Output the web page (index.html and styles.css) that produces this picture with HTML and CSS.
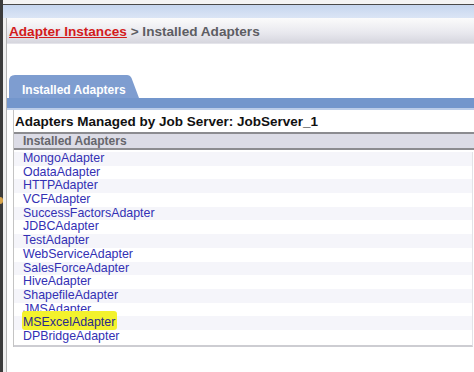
FILE: index.html
```html
<!DOCTYPE html>
<html>
<head>
<meta charset="utf-8">
<link rel="stylesheet" href="styles.css">
</head>
<body>
<div class="frame">
  <div class="edge"><span class="blip"></span></div>
  <div class="page">
    <div class="topgap"></div>
    <div class="blueband"></div>
    <div class="body">
      <div class="gutter"></div>
      <div class="main">
        <div class="crumbbar">
          <a class="crumb-link">Adapter Instances</a><span class="crumb-rest"> &gt; Installed Adapters</span>
        </div>
        <div class="spacer"></div>
        <div class="tabrow">
          <div class="tab"><span class="tab-label">Installed Adapters</span></div>
        </div>
        <div class="strip"></div>
        <div class="panel">
          <div class="heading">Adapters Managed by Job Server: JobServer_1</div>
          <div class="table">
            <div class="thead">Installed Adapters</div>
            <div class="rows">
              <div class="row odd"><a>MongoAdapter</a></div>
              <div class="row"><a>OdataAdapter</a></div>
              <div class="row odd"><a>HTTPAdapter</a></div>
              <div class="row"><a>VCFAdapter</a></div>
              <div class="row odd"><a>SuccessFactorsAdapter</a></div>
              <div class="row"><a>JDBCAdapter</a></div>
              <div class="row odd"><a>TestAdapter</a></div>
              <div class="row"><a>WebServiceAdapter</a></div>
              <div class="row odd"><a>SalesForceAdapter</a></div>
              <div class="row"><a>HiveAdapter</a></div>
              <div class="row odd"><a>ShapefileAdapter</a></div>
              <div class="row"><a>JMSAdapter</a></div>
              <div class="row odd"><a class="hl">MSExcelAdapter</a></div>
              <div class="row"><a>DPBridgeAdapter</a></div>
            </div>
          </div>
        </div>
      </div>
    </div>
  </div>
</div>
</body>
</html>
```

FILE: styles.css
```css
html, body {
  margin: 0;
  padding: 0;
  background: #ffffff;
}
body {
  width: 474px;
  height: 372px;
  overflow: hidden;
  font-family: "Liberation Sans", Arial, sans-serif;
}
.frame {
  display: flex;
  height: 372px;
}
.edge {
  width: 3px;
  background: #3b3b3b;
  display: flex;
  flex-direction: column;
  flex: none;
}
.blip {
  display: block;
  margin-top: 197px;
  width: 3px;
  height: 7px;
  background: #d9a54a;
  border-radius: 0 3px 3px 0;
}
.page {
  flex: 1;
  display: flex;
  flex-direction: column;
  min-width: 0;
}
.topgap {
  height: 4px;
  background: #f4f4f4;
  border-bottom: 1px solid #4a4a4a;
}
.blueband {
  height: 13px;
  background: linear-gradient(#c6d6ef, #dbe5f5);
}
.body {
  flex: 1;
  display: flex;
}
.gutter {
  width: 3px;
  background: #efefef;
  border-right: 1px solid #b4b4b4;
  flex: none;
}
.main {
  flex: 1;
  display: flex;
  flex-direction: column;
  min-width: 0;
}
.crumbbar {
  height: 25px;
  line-height: 28px;
  padding-left: 2px;
  background: linear-gradient(#fbfbfb, #e8e8ee 60%, #d6d6de);
  border-bottom: 1px solid #e4e4ea;
  font-size: 13.6px;
  font-weight: bold;
  white-space: nowrap;
}
.crumb-link {
  color: #d31b1b;
  text-decoration: underline;
}
.crumb-rest {
  color: #5d5d63;
}
.spacer {
  height: 31px;
}
.tabrow {
  display: flex;
  padding-left: 2px;
}
.tab {
  width: 130px;
  height: 23px;
  background: #7e9dd0;
  clip-path: path('M0 23 L0 6 Q0 0 6 0 L118 0 Q121 0 122.5 3 L130 23 Z');
  box-sizing: border-box;
  padding-left: 13px;
  padding-top: 5px;
}
.tab-label {
  display: inline-block;
  color: #ffffff;
  font-size: 12px;
  font-weight: bold;
  line-height: 14px;
  padding-bottom: 3px;
  border-bottom: 1px solid #a9bee2;
}
.strip {
  height: 10px;
  background: #7396cc;
  border-bottom: 2px solid #bccde8;
}
.panel {
  margin-left: 6px;
  border-left: 1px solid #c4c4c4;
  display: flex;
  flex-direction: column;
}
.heading {
  height: 22px;
  box-sizing: border-box;
  padding-top: 4px;
  padding-left: 1px;
  line-height: 16px;
  font-size: 13.5px;
  font-weight: bold;
  color: #111111;
  white-space: nowrap;
}
.table {
  display: flex;
  flex-direction: column;
}
.thead {
  height: 14px;
  line-height: 14px;
  border-top: 2px solid #8c8c90;
  border-bottom: 2px solid #8c8c90;
  background: #dcdce6;
  padding-left: 9px;
  font-size: 12px;
  font-weight: bold;
  color: #66666c;
  margin-bottom: 1px;
}
.rows {
  margin-top: 1px;
  margin-right: 1px;
  border-right: 1px solid #e2e2e6;
  border-bottom: 2px solid #cdcdd2;
  padding-bottom: 1px;
  display: flex;
  flex-direction: column;
}
.row {
  height: 13.7px;
  line-height: 13.7px;
  padding-left: 9px;
  font-size: 12.4px;
  white-space: nowrap;
}
.row.odd {
  background: #f5f5fa;
}
.row a {
  color: #3330b4;
  text-decoration: none;
}
.row a.hl {
  background: #f3f22c;
  padding: 4px 2px 1px 1px;
  margin-left: -1px;
  border-radius: 3px;
  color: #2a2a8a;
}
```
